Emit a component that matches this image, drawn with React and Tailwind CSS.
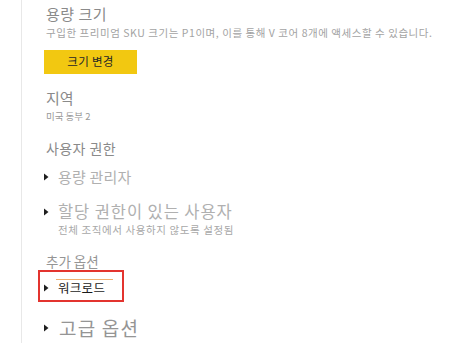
function Caret() {
  return (
    <svg width="5" height="8" viewBox="0 0 5 8" className="shrink-0">
      <polygon points="0,0.5 4.5,4 0,7.5" fill="#1f1f1f" />
    </svg>
  );
}

export default function App() {
  return (
    <div className="w-[474px] h-[343px] bg-white overflow-hidden flex font-['Noto_Sans_CJK_KR','Noto_Sans',sans-serif]">
      <div className="w-[21px] shrink-0" />
      <div className="flex-1 border-l border-[#e8e8e8] pl-[24px] flex flex-col items-start">
        <div className="mt-[4px] text-[15px] leading-[20px] text-[#8a8a8a] tracking-[0.5px]">용량 크기</div>
        <div className="mt-[2px] text-[10.5px] leading-[14px] text-[#a3a3a3] tracking-[0.55px]">
          구입한 프리미엄 SKU 크기는 P1이며, 이를 통해 V 코어 8개에 액세스할 수 있습니다.
        </div>
        <button className="mt-[10px] -ml-[2px] w-[93px] h-[24px] bg-[#f2c811] text-[11.5px] font-normal text-[#262626] flex items-center justify-center tracking-[0.3px]">
          크기 변경
        </button>
        <div className="mt-[14px] text-[15px] leading-[20px] text-[#8a8a8a]">지역</div>
        <div className="mt-[2px] text-[9.5px] leading-[12px] text-[#999999]">미국 동부 2</div>
        <div className="mt-[16px] text-[14px] leading-[20px] text-[#8a8a8a] tracking-[0.4px]">사용자 권한</div>

        <div className="mt-[9px] -ml-[2px] flex items-center gap-[9px] h-[20px]">
          <Caret />
          <span className="text-[15px] leading-[20px] text-[#b0b0b0] tracking-[0.2px]">용량 관리자</span>
        </div>

        <div className="mt-[14px] -ml-[2px] flex items-center gap-[9px] h-[21px]">
          <Caret />
          <span className="text-[16.5px] leading-[21px] text-[#b0b0b0] tracking-[0.9px]">할당 권한이 있는 사용자</span>
        </div>
        <div className="mt-[1px] ml-[12px] text-[10.5px] leading-[13px] text-[#a8a8a8] tracking-[0.6px]">전체 조직에서 사용하지 않도록 설정됨</div>

        <div className="mt-[16px] text-[13.5px] leading-[18px] text-[#959595]">추가 옵션</div>

        <div className="-ml-[8px] w-[86px] h-[32px] border-2 border-[#e3342f] flex flex-col">
          <div className="mt-[7px] ml-[16px] w-[57px] h-px bg-[#f0b070]" />
          <div className="mt-[1px] ml-[4px] flex items-center gap-[9px] h-[14px]">
            <Caret />
            <span className="text-[12.5px] leading-[14px] text-[#1a1a1a] tracking-[0.3px]">워크로드</span>
          </div>
        </div>

        <div className="mt-[14px] -ml-[2px] flex items-center gap-[10px] h-[24px]">
          <Caret />
          <span className="text-[19px] leading-[24px] text-[#959595] tracking-[1.2px]">고급 옵션</span>
        </div>
      </div>
    </div>
  );
}
